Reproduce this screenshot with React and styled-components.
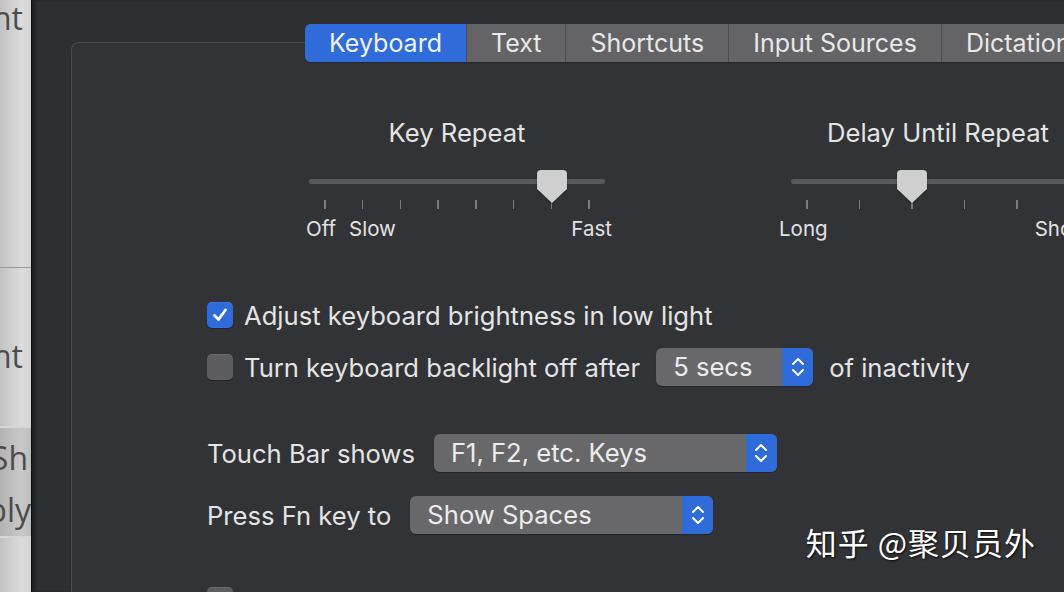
import styled, { createGlobalStyle } from "styled-components";

const GlobalStyle = createGlobalStyle`
  html, body {
    margin: 0;
    padding: 0;
    background: #2e2f32;
  }
  body {
    font-family: Inter, "Noto Sans", sans-serif;
    -webkit-font-smoothing: antialiased;
  }
`;

const Screen = styled.div`
  position: relative;
  width: 1064px;
  height: 592px;
  display: flex;
  overflow: hidden;
  background: #2e2f32;
`;

const Sidebar = styled.aside`
  flex: none;
  width: 31px;
  border-right: 1px solid #0c0c0d;
  display: flex;
  flex-direction: column;
  background: linear-gradient(90deg, #c2c2c2 0%, #dcdcdc 70%, #d4d4d4 100%);
  font-family: "Open Sans", sans-serif;
  font-size: 32px;
  color: #4c4c4c;
`;

const SideRow = styled.div`
  display: flex;
  justify-content: flex-end;
  align-items: ${(p) => p.$align || "flex-start"};
  height: ${(p) => p.$h}px;
  box-sizing: border-box;
  padding-top: ${(p) => p.$pt || 0}px;
  padding-right: ${(p) => p.$pr ?? 8}px;
  overflow: hidden;
  white-space: nowrap;
  line-height: 36px;
  border-bottom: ${(p) => (p.$line ? `1px solid ${p.$line}` : "none")};
`;

const SideBand = styled.div`
  display: flex;
  flex-direction: column;
  height: 112px;
  padding-top: 4px;
  box-sizing: border-box;
  border-top: 2px solid #d6d6d6;
  border-bottom: 2px solid #d6d6d6;
  background: linear-gradient(90deg, #b4b4b4 0%, #c8c8c8 70%, #bcbcbc 100%);
  line-height: 54px;
  white-space: nowrap;
  overflow: hidden;
`;

const Main = styled.main`
  flex: 1;
  min-width: 0;
  padding: 42px 0 0 39px;
  box-shadow: inset 3px 0 3px rgba(0, 0, 0, 0.35);
  display: flex;
`;

const Panel = styled.section`
  flex: none;
  width: 1100px;
  display: flex;
  flex-direction: column;
  background: #323337;
  border-top: 1px solid #4a4b4f;
  border-left: 1px solid #4a4b4f;
  border-top-left-radius: 8px;
  color: #e3e3e3;
`;

const TabBar = styled.nav`
  flex: none;
  align-self: flex-start;
  display: flex;
  height: 38px;
  margin: -19px 0 0 233px;
  border-radius: 6px;
  overflow: hidden;
  background: #646466;
  box-shadow: 0 1px 1px rgba(0, 0, 0, 0.25);
`;

const Tab = styled.div`
  flex: none;
  padding: 0 24px;
  font-size: 25px;
  line-height: 38px;
  white-space: nowrap;
  color: ${(p) => (p.$active ? "#eef2ff" : "#e8e8e8")};
  background: ${(p) => (p.$active ? "#2f6bd9" : "transparent")};
  border-left: ${(p) => (p.$first ? "none" : "1px solid #4e4e50")};
`;

const SliderRow = styled.div`
  display: flex;
  gap: 186px;
  margin: 56px 0 0 237px;
`;

const SliderGroup = styled.div`
  flex: none;
  width: ${(p) => p.$w}px;
  display: flex;
  flex-direction: column;
`;

const SliderTitle = styled.div`
  text-align: center;
  font-size: 25.6px;
  line-height: 30px;
  white-space: nowrap;
  color: #e4e4e4;
`;

const TrackArea = styled.div`
  position: relative;
  height: 30px;
  margin-top: 22px;
`;

const Track = styled.div`
  margin-top: 9px;
  height: 5px;
  border-radius: 3px;
  background: #58595c;
`;

const Knob = styled.svg`
  position: absolute;
  top: 0;
  width: 30px;
  height: 34px;
  filter: drop-shadow(0 1px 1px rgba(0, 0, 0, 0.35));
`;

const Ticks = styled.div`
  display: flex;
  justify-content: space-between;
  height: 9px;
  padding: 0 15px;
`;

const Tick = styled.span`
  width: 1.5px;
  background: #7b7c7f;
`;

const TickLabels = styled.div`
  display: flex;
  margin: 8px ${(p) => p.$mr}px 0 ${(p) => p.$ml}px;
  font-size: 20.5px;
  line-height: 24px;
  white-space: nowrap;
  color: #e2e2e2;
`;

const TickLabel = styled.span`
  margin-left: ${(p) => (p.$push ? "auto" : `${p.$gap || 0}px`)};
`;

const Options = styled.div`
  display: flex;
  flex-direction: column;
  margin-left: 135px;
`;

const Row = styled.div`
  display: flex;
  align-items: center;
  height: 38px;
  gap: ${(p) => p.$gap || 11}px;
  margin-top: ${(p) => p.$mt}px;
  font-size: 25.6px;
  white-space: nowrap;
  color: #e4e4e4;
`;

const Box = styled.span`
  flex: none;
  width: 26px;
  height: 26px;
  margin-right: ${(p) => p.$after || 0}px;
  border-radius: 5px;
  display: flex;
  align-items: center;
  justify-content: center;
  background: ${(p) => (p.$checked ? "#2f6bdb" : "#5d5d60")};
  box-shadow: inset 0 1px 0 rgba(255, 255, 255, 0.08), 0 1px 1px rgba(0, 0, 0, 0.3);
`;

const Popup = styled.div`
  flex: none;
  width: ${(p) => p.$w}px;
  height: 38px;
  display: flex;
  border-radius: 6px;
  overflow: hidden;
  background: #68686a;
  box-shadow: 0 1px 1px rgba(0, 0, 0, 0.3);
`;

const PopupLabel = styled.span`
  flex: 1;
  padding-left: 17px;
  line-height: 38px;
  color: #ececec;
`;

const PopupArrows = styled.span`
  flex: none;
  width: 31px;
  display: flex;
  align-items: center;
  justify-content: center;
  background: #2f6bd9;
`;

const Watermark = styled.div`
  position: absolute;
  right: 28px;
  bottom: 28px;
  font-family: "Noto Sans CJK SC", sans-serif;
  font-size: 31px;
  letter-spacing: 1px;
  color: #ffffff;
  text-shadow: 1px 1px 2px rgba(0, 0, 0, 0.85);
`;

const tabs = ["Keyboard", "Text", "Shortcuts", "Input Sources", "Dictation"];

const Check = () => (
  <svg width="18" height="18" viewBox="0 0 18 18">
    <path d="M3.5 9.5 L7.5 13.5 L14.5 4" fill="none" stroke="#fff" strokeWidth="2.8" strokeLinecap="round" strokeLinejoin="round" />
  </svg>
);

const Arrows = () => (
  <svg width="16" height="26" viewBox="0 0 16 26">
    <path d="M3 10 L8 5 L13 10" fill="none" stroke="#fff" strokeWidth="2" strokeLinecap="round" strokeLinejoin="round" />
    <path d="M3 16 L8 21 L13 16" fill="none" stroke="#fff" strokeWidth="2" strokeLinecap="round" strokeLinejoin="round" />
  </svg>
);

const Slider = ({ title, width, ticks, value, labels, ml, mr }) => {
  const step = (width - 30) / (ticks - 1);
  return (
    <SliderGroup $w={width}>
      <SliderTitle>{title}</SliderTitle>
      <TrackArea>
        <Track />
        <Knob viewBox="0 0 30 34" style={{ left: value * step }}>
          <path d="M4 0 H26 Q30 0 30 4 V19 L15 33 L0 19 V4 Q0 0 4 0 Z" fill="#cfcfd0" />
        </Knob>
      </TrackArea>
      <Ticks>
        {Array.from({ length: ticks }).map((_, i) => (
          <Tick key={i} />
        ))}
      </Ticks>
      <TickLabels $ml={ml} $mr={mr}>
        {labels.map((l) => (
          <TickLabel key={l.text} $gap={l.gap} $push={l.push}>
            {l.text}
          </TickLabel>
        ))}
      </TickLabels>
    </SliderGroup>
  );
};

const App = () => {
  return (
    <Screen>
      <GlobalStyle />
      <Sidebar>
        <SideRow $h={268} $line="#9a9a9a" $pr={8}>nt</SideRow>
        <SideRow $h={158} $pt={18} $align="center" $pr={8}>nt</SideRow>
        <SideBand>
          <SideRow $h={52} $pr={3} $align="center">Sh</SideRow>
          <SideRow $h={52} $pr={0} $align="center">ply</SideRow>
        </SideBand>
      </Sidebar>
      <Main>
        <Panel>
          <TabBar>
            {tabs.map((t, i) => (
              <Tab key={t} $active={i === 0} $first={i === 0}>
                {t}
              </Tab>
            ))}
          </TabBar>
          <SliderRow>
            <Slider
              title="Key Repeat"
              width={296}
              ticks={8}
              value={6}
              ml={-3}
              mr={-7}
              labels={[
                { text: "Off" },
                { text: "Slow", gap: 13 },
                { text: "Fast", push: true },
              ]}
            />
            <Slider
              title="Delay Until Repeat"
              width={294}
              ticks={6}
              value={2}
              ml={-12}
              mr={-2}
              labels={[{ text: "Long" }, { text: "Short", push: true }]}
            />
          </SliderRow>
          <Options>
            <Row $mt={55}>
              <Box $checked>
                <Check />
              </Box>
              Adjust keyboard brightness in low light
            </Row>
            <Row $mt={14} $gap={16}>
              <Box $after={-5} />
              <span>Turn keyboard backlight off after</span>
              <Popup $w={157}>
                <PopupLabel>5 secs</PopupLabel>
                <PopupArrows>
                  <Arrows />
                </PopupArrows>
              </Popup>
              <span>of inactivity</span>
            </Row>
            <Row $mt={48} $gap={19}>
              <span>Touch Bar shows</span>
              <Popup $w={343}>
                <PopupLabel>F1, F2, etc. Keys</PopupLabel>
                <PopupArrows>
                  <Arrows />
                </PopupArrows>
              </Popup>
            </Row>
            <Row $mt={24} $gap={19}>
              <span>Press Fn key to</span>
              <Popup $w={303}>
                <PopupLabel>Show Spaces</PopupLabel>
                <PopupArrows>
                  <Arrows />
                </PopupArrows>
              </Popup>
            </Row>
            <Row $mt={47}>
              <Box />
            </Row>
          </Options>
        </Panel>
      </Main>
      <Watermark>知乎 @聚贝员外</Watermark>
    </Screen>
  );
};

export default App;
